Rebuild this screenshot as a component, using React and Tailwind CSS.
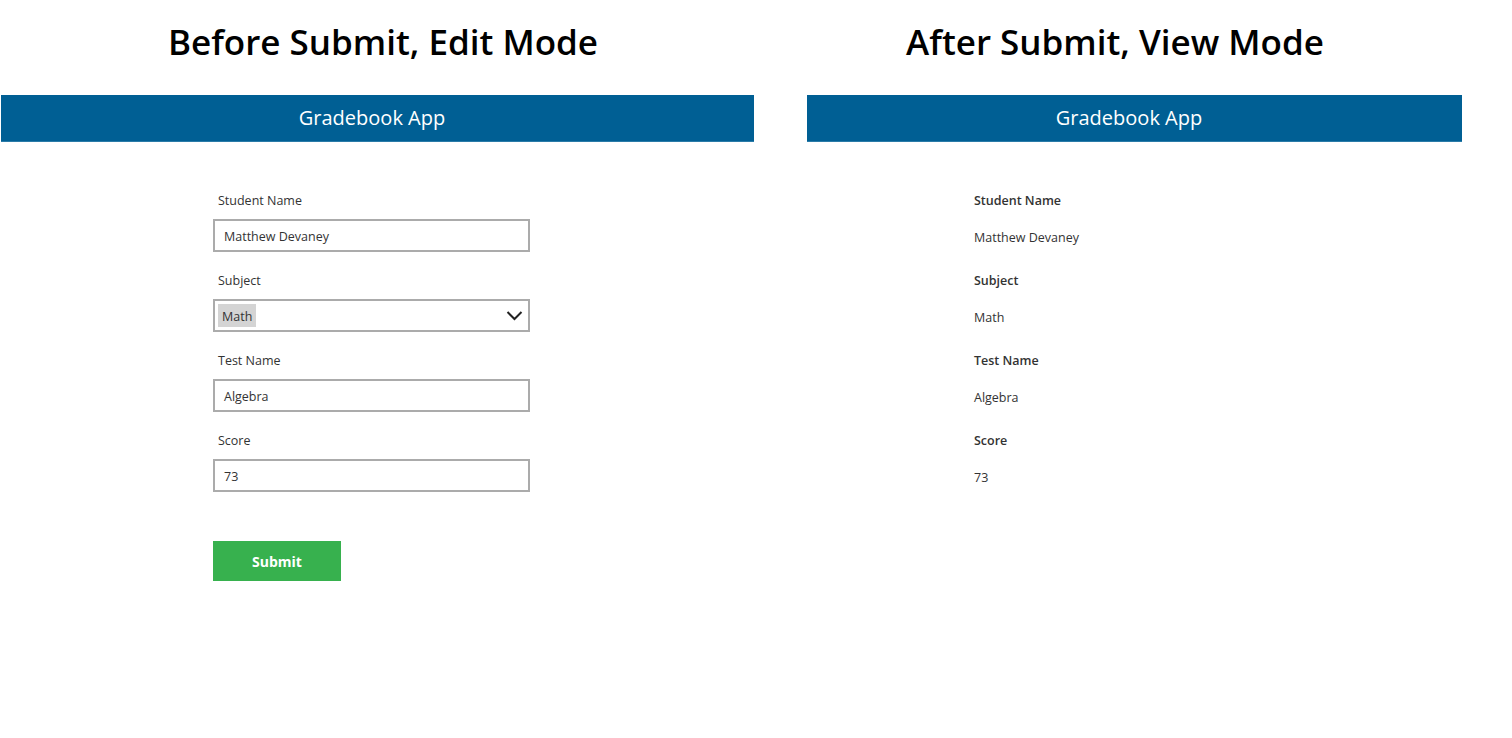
import React from 'react';

const font = { fontFamily: '"Open Sans", "Noto Sans", sans-serif' };

const fields = [
  { label: 'Student Name', value: 'Matthew Devaney' },
  { label: 'Subject', value: 'Math', select: true },
  { label: 'Test Name', value: 'Algebra' },
  { label: 'Score', value: '73' },
];

function Header() {
  return (
    <div className="h-[47px] bg-[#005f94] border-b border-[#2a7ba8] flex items-center justify-center pr-[11px]">
      <span className="text-[20px] text-white">Gradebook App</span>
    </div>
  );
}

function EditField({ label, value, select }) {
  return (
    <div className="flex flex-col">
      <div className="h-[18px] pl-[5px] text-[12.5px] leading-[18px] text-[#333]">{label}</div>
      <div className="mt-[9px] h-[33px] w-[317px] border-2 border-[#ababab] flex items-center text-[12.5px] text-[#333]">
        {select ? (
          <>
            <span className="ml-[3px] px-[4px] pt-[4px] pb-[1px] bg-[#d4d4d4]">{value}</span>
            <svg className="ml-auto mr-[5px]" width="17" height="11" viewBox="0 0 17 11">
              <path d="M1.5 2 L8.5 9 L15.5 2" fill="none" stroke="#222" strokeWidth="2" />
            </svg>
          </>
        ) : (
          <span className="pl-[9px] pt-[4px]">{value}</span>
        )}
      </div>
    </div>
  );
}

function ViewField({ label, value }) {
  return (
    <div className="flex flex-col">
      <div className="h-[18px] text-[12.5px] leading-[18px] font-semibold text-[#333]">{label}</div>
      <div className="mt-[10px] h-[33px] pt-[3px] flex items-center text-[12.5px] text-[#333]">{value}</div>
    </div>
  );
}

export default function App() {
  return (
    <div className="w-[1512px] h-[738px] bg-white overflow-hidden" style={font}>
      <div className="flex h-[86px] pt-[18px]">
        <div className="w-[766px] text-center text-[35px] leading-[48px] font-semibold text-black">
          Before Submit, Edit Mode
        </div>
        <div className="w-[698px] text-center text-[35px] leading-[48px] font-semibold text-black">
          After Submit, View Mode
        </div>
      </div>
      <div className="flex mt-[9px]">
        <div className="ml-[1px] w-[753px]">
          <Header />
          <div className="pl-[212px] pt-[50px] flex flex-col gap-[20px]">
            {fields.map((f) => (
              <EditField key={f.label} {...f} />
            ))}
            <button className="mt-[29px] w-[128px] h-[40px] bg-[#37b14e] text-white text-[14px] font-bold">
              Submit
            </button>
          </div>
        </div>
        <div className="ml-[53px] w-[655px]">
          <Header />
          <div className="pl-[167px] pt-[50px] flex flex-col gap-[19px]">
            {fields.map((f) => (
              <ViewField key={f.label} label={f.label} value={f.value} />
            ))}
          </div>
        </div>
      </div>
    </div>
  );
}
